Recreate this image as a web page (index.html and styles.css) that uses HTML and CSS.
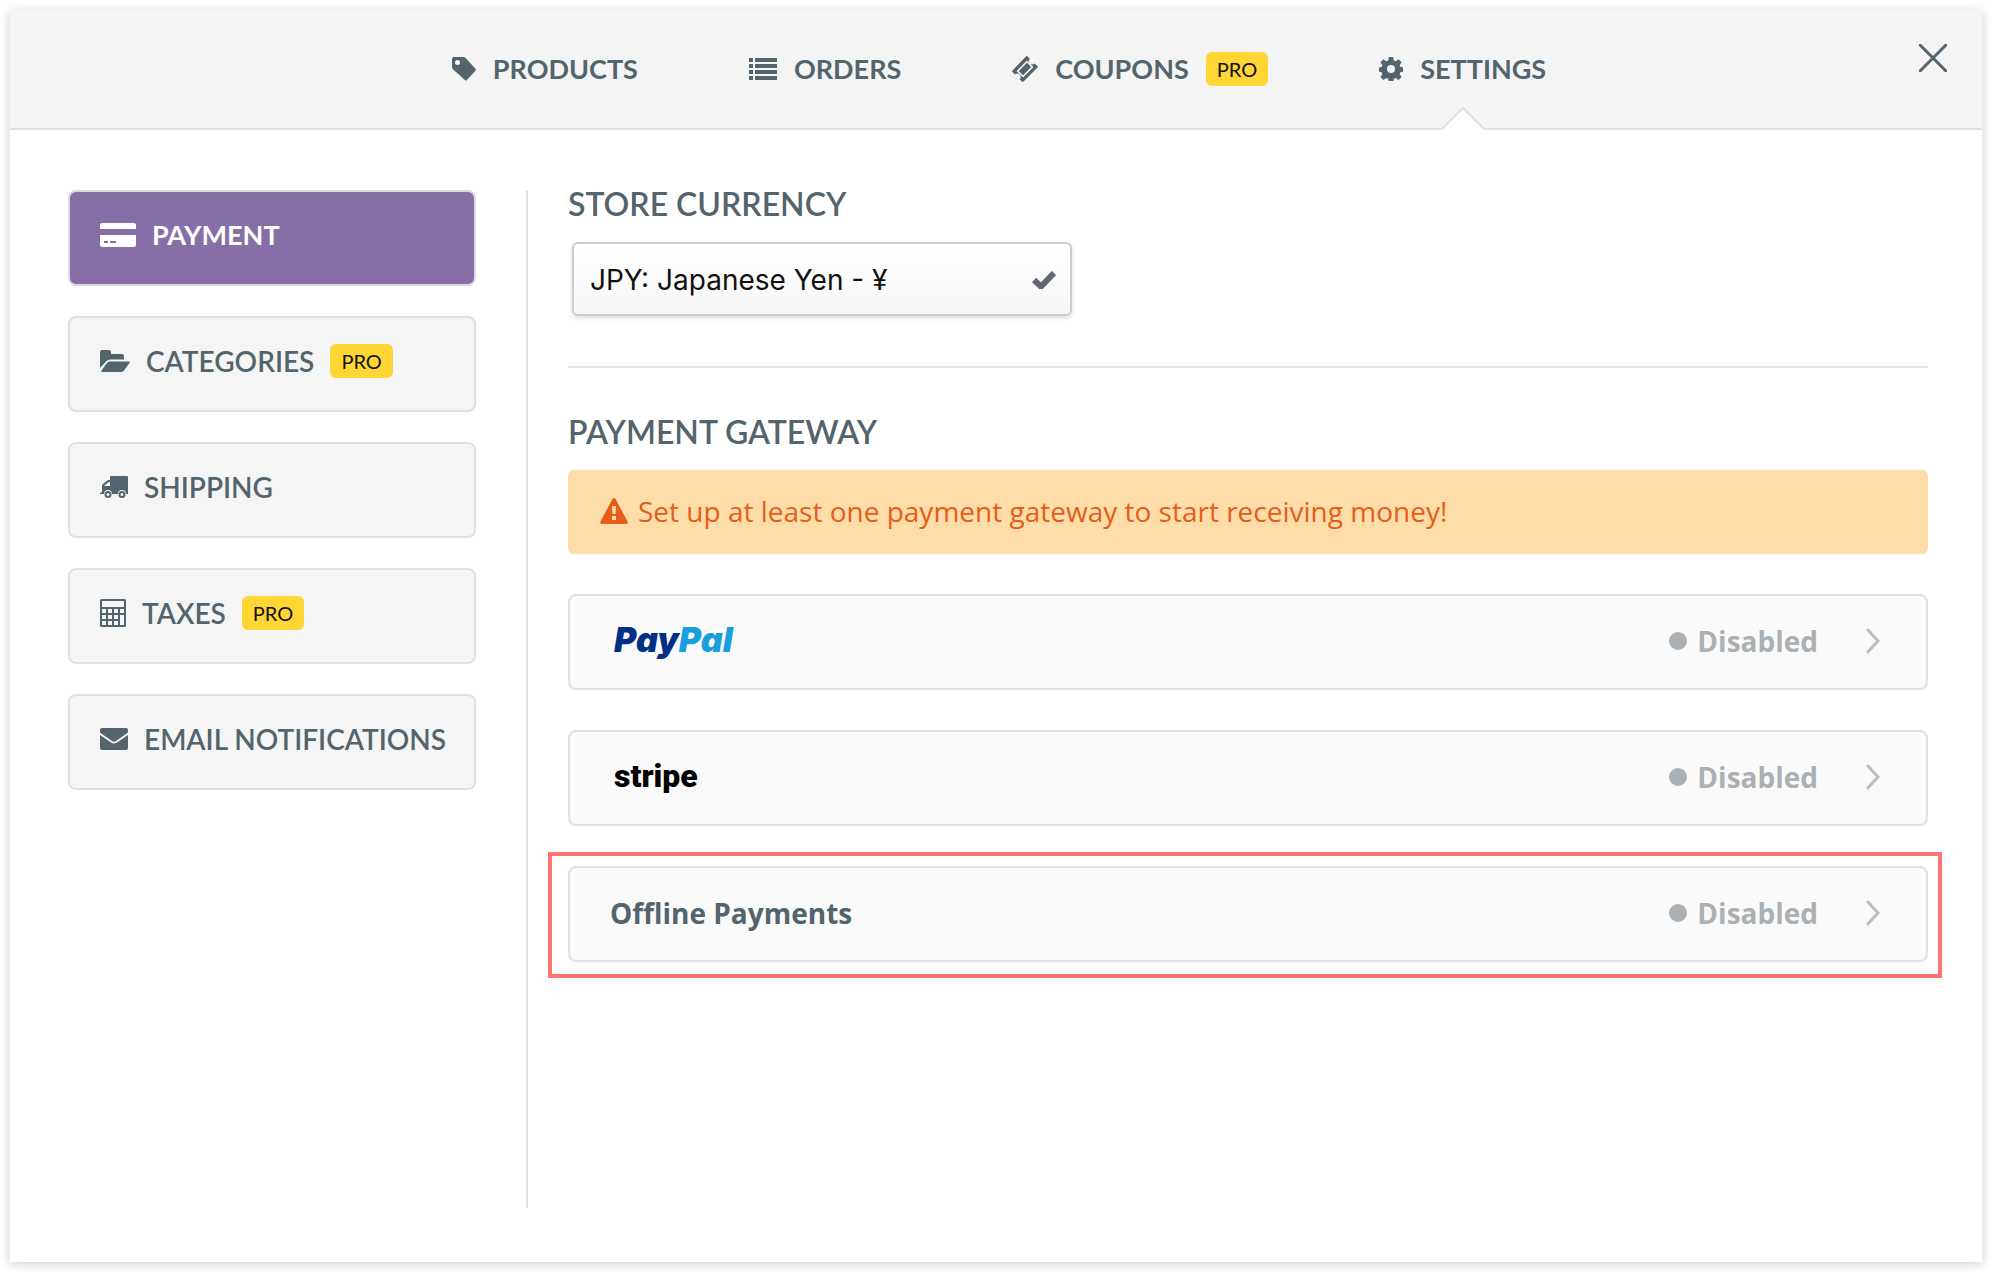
FILE: index.html
```html
<!DOCTYPE html>
<html lang="en">
<head>
<meta charset="utf-8">
<meta name="viewport" content="width=device-width, initial-scale=1">
<title>Store settings</title>
<link rel="stylesheet" href="styles.css">
</head>
<body>
<div class="panel">
  <header class="header">
    <nav class="tabs" aria-label="Store">
      <a class="tab" href="#products">
        <svg class="icon" width="24" height="24" viewBox="0 0 24 24"><path fill-rule="evenodd" d="M2 0h9q1.500 0 2.600 1L23.300 11.500q1 1.200 0 2.400l-8.400 9.200q-1 1-2 0L1.200 12.600Q0 11.400 0 10V2Q0 0 2 0zM5.500 3a2.500 2.500 0 1 0 0 5 2.500 2.500 0 0 0 0-5z"/></svg>
        <span>PRODUCTS</span>
      </a>
      <a class="tab" href="#orders">
        <svg class="icon" width="28" height="22" viewBox="0 0 28 22"><path d="M0 0h4v4H0zM6 0h22v4H6zM0 6h4v4H0zM6 6h22v4H6zM0 12h4v4H0zM6 12h22v4H6zM0 18h4v4H0zM6 18h22v4H6z"/></svg>
        <span>ORDERS</span>
      </a>
      <a class="tab" href="#coupons">
        <svg class="icon" width="26" height="26" viewBox="0 0 26 26"><path fill-rule="evenodd" d="M15.600.4l2.300 2.400a3.200 3.200 0 0 0 4.600 4.600l3 2.600q.8.800 0 1.600L11.500 25.600q-.8.800-1.600 0l-2.300-2.400A3.200 3.200 0 0 0 3 18.600L.5 16q-.8-.8 0-1.600L14 .4q.8-.8 1.600 0zM15 4.500L4.500 15 11 21.500 21.500 11z"/><path d="M15 6.800L19.200 11 11 19.200 6.800 15z"/></svg>
        <span>COUPONS</span>
        <span class="badge">PRO</span>
      </a>
      <a class="tab tab-active" href="#settings" aria-current="page">
        <svg class="icon" width="24" height="24" viewBox="0 0 24 24"><path fill-rule="evenodd" d="M9.800 0h4.400l.6 3.400 1.900.8 2.900-2 3 3-2 2.800.8 1.900 3.600.5v4.200l-3.600.6-.8 1.900 2 2.900-3 3-2.900-2-1.900.8-.6 3.200H9.800l-.6-3.200-1.900-.8-2.900 2-3-3 2-2.900-.8-1.900L0 14.600v-4.200l2.600-.5.8-1.900-2-2.800 3-3 2.900 2 1.900-.8zM12 8a4 4 0 1 0 0 8 4 4 0 0 0 0-8z"/></svg>
        <span>SETTINGS</span>
        <svg class="caret" width="44" height="24" viewBox="0 0 44 24"><path class="caret-fill" d="M0 24L22 1l22 23z"/><path class="caret-line" d="M1 23L22 2l21 21"/></svg>
      </a>
    </nav>
    <button class="close" type="button" aria-label="Close">
      <svg width="28" height="28" viewBox="0 0 28 28"><path d="M1 1l26 26M27 1L1 27"/></svg>
    </button>
  </header>

  <div class="content">
    <nav class="sidebar" aria-label="Settings">
      <a class="side-item side-active" href="#payment" aria-current="page">
        <svg class="icon" width="36" height="24" viewBox="0 0 36 24"><path fill-rule="evenodd" d="M2 0h32q2 0 2 2v4H0V2q0-2 2-2zM0 12h36v10q0 2-2 2H2q-2 0-2-2zM4 18v2h4v-2zM10 18v2h6v-2z"/></svg>
        <span>PAYMENT</span>
      </a>
      <a class="side-item" href="#categories">
        <svg class="icon" width="30" height="22" viewBox="0 0 30 22"><path d="M2 0h7q2 0 2 2v2h11q2 0 2 2v3.500H10q-2 0-3.500 1.500L0 18V2q0-2 2-2z"/><path d="M9.500 11.500H29q1.400 0 .6 1.200L24 20.500q-1.200 1.500-3 1.500H2q-1.400 0-.6-1.200L7 13q1-1.500 2.500-1.500z"/></svg>
        <span>CATEGORIES</span>
        <span class="badge">PRO</span>
      </a>
      <a class="side-item" href="#shipping">
        <svg class="icon" width="28" height="22" viewBox="0 0 28 22"><path fill-rule="evenodd" d="M11 0h16q1 0 1 1v17h-2a4 4 0 0 0-8 0h-6a4 4 0 0 0-8 0H0v-1l2-1V10q0-1 .7-1.800L6.500 5Q7.300 4 8.500 4H10V1q0-1 1-1zM4 10h6V6H8.600z"/><path fill-rule="evenodd" d="M8 15a3.500 3.500 0 1 0 0 7 3.500 3.500 0 0 0 0-7zm0 2a1.500 1.500 0 1 1 0 3 1.500 1.500 0 0 1 0-3zM22 15a3.500 3.500 0 1 0 0 7 3.500 3.500 0 0 0 0-7zm0 2a1.500 1.500 0 1 1 0 3 1.500 1.500 0 0 1 0-3z"/></svg>
        <span>SHIPPING</span>
      </a>
      <a class="side-item" href="#taxes">
        <svg class="icon" width="26" height="28" viewBox="0 0 26 28"><path fill-rule="evenodd" d="M1.500 0h23Q26 0 26 1.500v25q0 1.500-1.500 1.500h-23Q0 28 0 26.500v-25Q0 0 1.500 0zM2 2v6h22V2zM2 10v4h4v-4zM8 10v4h4v-4zM14 10v4h4v-4zM20 10v4h4v-4zM2 16v4h4v-4zM8 16v4h4v-4zM14 16v4h4v-4zM20 16v10h4V16zM2 22v4h4v-4zM8 22v4h4v-4zM14 22v4h4v-4z"/></svg>
        <span>TAXES</span>
        <span class="badge">PRO</span>
      </a>
      <a class="side-item" href="#email">
        <svg class="icon" width="28" height="22" viewBox="0 0 28 22"><path d="M2 0h24q2 0 2 2v1.500q0 1-1 1.800L16 13q-2 1.400-4 0L1 5.300Q0 4.500 0 3.500V2q0-2 2-2z"/><path d="M0 7l11 7.500q3 2 6 0L28 7v13q0 2-2 2H2q-2 0-2-2z"/></svg>
        <span>EMAIL NOTIFICATIONS</span>
      </a>
    </nav>

    <main class="main">
      <section class="currency">
        <h2 class="title"><label for="currency">STORE CURRENCY</label></h2>
        <div class="select-wrap">
          <select class="select" id="currency">
            <option>JPY: Japanese Yen - ¥</option>
          </select>
          <svg class="check" width="24" height="18" viewBox="0 0 24 18"><path d="M2 9l7 6.500L22 2"/></svg>
        </div>
      </section>

      <section class="gateways">
        <h2 class="title">PAYMENT GATEWAY</h2>
        <p class="alert">
          <svg class="icon" width="28" height="26" viewBox="0 0 28 26"><path fill-rule="evenodd" d="M12.500 1q1.500-2 3 0l12 22.500q1 2.500-1.500 2.500H2q-2.500 0-1.500-2.500zM12 8l.5 8h3l.5-8zM12 18v4h4v-4z"/></svg>
          <span>Set up at least one payment gateway to start receiving money!</span>
        </p>
        <a class="gateway" href="#paypal">
          <span class="logo paypal">Pay<span class="pal">Pal</span></span>
          <span class="status">Disabled</span>
          <svg class="chevron" width="14" height="26" viewBox="0 0 14 26"><path d="M1 1l11 12L1 25"/></svg>
        </a>
        <a class="gateway" href="#stripe">
          <span class="logo stripe">stripe</span>
          <span class="status">Disabled</span>
          <svg class="chevron" width="14" height="26" viewBox="0 0 14 26"><path d="M1 1l11 12L1 25"/></svg>
        </a>
        <a class="gateway gateway-marked" href="#offline">
          <span>Offline Payments</span>
          <span class="status">Disabled</span>
          <svg class="chevron" width="14" height="26" viewBox="0 0 14 26"><path d="M1 1l11 12L1 25"/></svg>
        </a>
      </section>
    </main>
  </div>
</div>
</body>
</html>
```
FILE: styles.css
```css
* {
  box-sizing: border-box;
}

body {
  margin: 0;
  padding: 10px;
  background: #fff;
  color: #53646d;
  font-family: "Open Sans", sans-serif;
  font-size: 28px;
  line-height: 36px;
}

a {
  color: inherit;
  text-decoration: none;
}

svg {
  display: block;
  flex: none;
}

.icon {
  fill: currentColor;
}

.panel {
  display: flex;
  flex-direction: column;
  min-height: calc(100vh - 20px);
  background: #fff;
  box-shadow: 0 2px 10px rgba(0, 0, 0, 0.2);
}

/* Header */

.header {
  position: relative;
  height: 120px;
  background: #f4f4f4;
  border-bottom: 2px solid #e0e0e0;
}

.tabs {
  display: flex;
  justify-content: center;
  gap: 111px;
  height: 100%;
  padding-left: 6px;
}

.tab {
  position: relative;
  display: flex;
  align-items: center;
  gap: 17px;
  height: 100%;
  font-family: Lato, sans-serif;
  font-size: 27px;
  font-weight: 700;
}

.caret {
  position: absolute;
  left: calc(50% - 22px);
  bottom: -2px;
}

.caret-fill {
  fill: #fff;
}

.caret-line {
  fill: none;
  stroke: #e0e0e0;
  stroke-width: 2;
}

.badge {
  padding: 0 11px;
  border-radius: 6px;
  background: #ffd633;
  color: #111;
  font-family: Lato, sans-serif;
  font-size: 20px;
  font-weight: 400;
  line-height: 34px;
}

.close {
  position: absolute;
  top: 34px;
  right: 35px;
  padding: 0;
  border: 0;
  background: none;
}

.close path {
  fill: none;
  stroke: #53646d;
  stroke-width: 3;
  stroke-linecap: round;
}

/* Body */

.content {
  display: flex;
  flex: 1;
  gap: 50px;
  padding: 60px 54px 54px 58px;
}

.sidebar {
  display: flex;
  flex: none;
  flex-direction: column;
  gap: 30px;
  width: 408px;
}

.side-item {
  display: flex;
  align-items: center;
  gap: 16px;
  height: 96px;
  padding: 0 0 6px 30px;
  border: 2px solid #e0e0e0;
  border-radius: 8px;
  background: #f5f5f5;
  font-family: Lato, sans-serif;
  font-weight: 600;
  white-space: nowrap;
}

.side-active {
  border-color: #dcd8e0;
  background: #866ea6;
  color: #fff;
  font-size: 27px;
  font-weight: 700;
}

.main {
  flex: 1;
  padding-left: 40px;
  border-left: 2px solid #e0e0e0;
}

.title {
  margin: 0;
  padding-bottom: 12px;
  font-family: Lato, sans-serif;
  font-size: 32px;
  font-weight: 600;
  line-height: 40px;
}

.currency {
  padding-bottom: 50px;
  border-bottom: 2px solid #e4e5ea;
}

.currency .title {
  margin-top: -6px;
  padding-bottom: 18px;
}

.select-wrap {
  position: relative;
  width: 500px;
  margin-left: 4px;
}

.select {
  display: block;
  width: 100%;
  height: 74px;
  padding: 2px 16px 0;
  appearance: none;
  border: 2px solid #cbccd2;
  border-radius: 6px;
  background: linear-gradient(#fff, #f7f7f7);
  box-shadow: 0 2px 4px rgba(0, 0, 0, 0.14);
  color: #111;
  font-family: Inter, sans-serif;
  font-size: 28px;
}

.check {
  position: absolute;
  top: 29px;
  right: 16px;
  pointer-events: none;
}

.check path {
  fill: none;
  stroke: #626871;
  stroke-width: 6;
}

.gateways {
  padding-top: 44px;
}

.alert {
  display: flex;
  align-items: center;
  gap: 10px;
  height: 84px;
  margin: 6px 0 40px;
  padding: 0 32px 2px;
  border-radius: 6px;
  background: #fedda8;
  color: #e65c1a;
}

.gateway {
  position: relative;
  display: flex;
  align-items: center;
  height: 96px;
  padding: 0 46px 2px 40px;
  border: 2px solid #e0e0e0;
  border-radius: 8px;
  background: #fafafa;
  font-weight: 700;
}

.gateway + .gateway {
  margin-top: 40px;
}

.gateway-marked::after {
  content: "";
  position: absolute;
  inset: -16px -16px -18px -22px;
  border: 4px solid #ff7373;
}

.logo {
  padding: 0 0 2px 4px;
}

.paypal {
  color: #002f86;
  font-family: Inter, sans-serif;
  font-size: 34px;
  font-style: italic;
  font-weight: 900;
}

.pal {
  color: #1a9fde;
}

.stripe {
  color: #000;
  font-family: Roboto, sans-serif;
  font-size: 32px;
  font-weight: 900;
}

.status {
  display: flex;
  align-items: center;
  gap: 10px;
  margin-left: auto;
  color: #aab0b4;
}

.status::before {
  content: "";
  width: 18px;
  height: 18px;
  border-radius: 50%;
  background: currentColor;
}

.chevron {
  margin-left: 48px;
}

.chevron path {
  fill: none;
  stroke: #b9c0c4;
  stroke-width: 3;
}
```
